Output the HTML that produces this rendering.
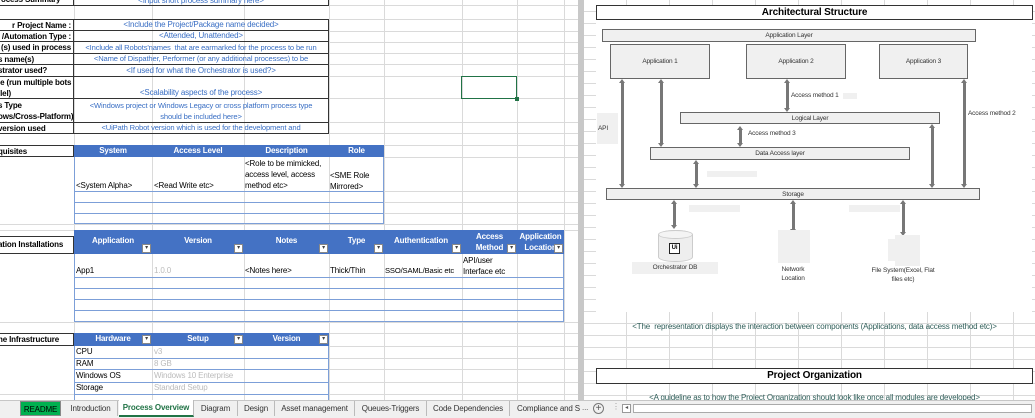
<!DOCTYPE html>
<html><head><meta charset="utf-8"><style>
*{margin:0;padding:0;box-sizing:border-box}
body{width:1035px;height:418px;overflow:hidden;background:#fff;position:relative;font-family:"Liberation Sans",sans-serif;font-size:8px;letter-spacing:-0.15px;color:#000}
.a{position:absolute}
.h{position:absolute;height:1px;background:#dadada}
.v{position:absolute;width:1px;background:#dadada}
.t{position:absolute;white-space:nowrap}
.lb{position:absolute;border:1px solid #333;border-left:none;font-weight:bold;font-size:8px;white-space:nowrap;overflow:hidden;display:flex;align-items:center;justify-content:flex-end;padding-right:2px}
.vb{position:absolute;border:1px solid #333;color:#3a6fc4;text-align:center;font-size:8px;white-space:nowrap;overflow:hidden}
.hd{position:absolute;background:#4472c4;color:#fff;font-weight:bold;font-size:8px;text-align:center;white-space:nowrap}
.dd{position:absolute;width:9px;height:9px;background:#fff;border:1px solid #888;font-size:6px;color:#444;line-height:7px;text-align:center}
.bx{position:absolute;background:#f0f0f0;border:1.5px solid #666;font-size:6.5px;color:#333;display:flex;align-items:center;justify-content:center;white-space:nowrap}
.ar{position:absolute;width:3px;background:#777}
.ar:before,.ar:after{content:"";position:absolute;left:-2px;border-left:3.5px solid transparent;border-right:3.5px solid transparent}
.ar:before{top:-3px;border-bottom:4px solid #777}
.ar:after{bottom:-3px;border-top:4px solid #777}
.gy{position:absolute;background:#f0f0f0}
.tab{position:absolute;top:401px;height:15px;font-size:8px;color:#333;text-align:center;line-height:15px;border-right:1px solid #bbb;white-space:nowrap;overflow:hidden}
.ds{font-size:6.5px;color:#333}
</style></head><body>

<div class="h" style="left:0;width:578px;top:19px"></div>
<div class="h" style="left:0;width:578px;top:133px"></div>
<div class="h" style="left:0;width:578px;top:224px"></div>
<div class="h" style="left:0;width:578px;top:230px"></div>
<div class="h" style="left:0;width:578px;top:322px"></div>
<div class="h" style="left:0;width:578px;top:333px"></div>
<div class="h" style="left:329px;width:249px;top:346px"></div>
<div class="h" style="left:329px;width:249px;top:358px"></div>
<div class="h" style="left:329px;width:249px;top:369px"></div>
<div class="h" style="left:329px;width:249px;top:382px"></div>
<div class="h" style="left:0;width:578px;top:394px"></div>
<div class="h" style="left:329px;width:249px;top:5px"></div>
<div class="h" style="left:329px;width:249px;top:31px"></div><div class="h" style="left:329px;width:249px;top:42px"></div>
<div class="h" style="left:329px;width:249px;top:53px"></div><div class="h" style="left:329px;width:249px;top:64px"></div>
<div class="h" style="left:329px;width:249px;top:76px"></div><div class="h" style="left:329px;width:249px;top:98px"></div>
<div class="h" style="left:329px;width:249px;top:122px"></div>
<div class="h" style="left:384px;width:194px;top:145px"></div><div class="h" style="left:384px;width:194px;top:157px"></div>
<div class="h" style="left:384px;width:194px;top:191px"></div><div class="h" style="left:384px;width:194px;top:202px"></div>
<div class="h" style="left:384px;width:194px;top:213px"></div>
<div class="v" style="left:74px;top:0;height:400px"></div>
<div class="v" style="left:152px;top:0;height:400px"></div>
<div class="v" style="left:244px;top:0;height:400px"></div>
<div class="v" style="left:329px;top:0;height:400px"></div>
<div class="v" style="left:384px;top:0;height:400px"></div>
<div class="v" style="left:462px;top:0;height:400px"></div>
<div class="v" style="left:517px;top:0;height:400px"></div>
<div class="v" style="left:564px;top:0;height:400px"></div>

<div class="lb" style="left:-2px;top:-8px;width:76px;height:14px;justify-content:flex-start;padding-left:0">rocess Summary</div>
<div class="vb" style="left:73px;top:-8px;width:256px;height:14px;line-height:12px;padding-top:2px">&lt;Input short process summary here&gt;</div>
<div class="lb" style="left:-2px;top:19px;width:76px;height:12px">r Project Name :</div>
<div class="vb" style="left:73px;top:19px;width:256px;height:12px;line-height:10px">&lt;Include the Project/Package name decided&gt;</div>
<div class="lb" style="left:-2px;top:30px;width:76px;height:12px">/Automation Type :</div>
<div class="vb" style="left:73px;top:30px;width:256px;height:12px;line-height:10px">&lt;Attended, Unattended&gt;</div>
<div class="lb" style="left:-2px;top:41px;width:76px;height:13px">(s) used in process</div>
<div class="vb" style="left:73px;top:41px;width:256px;height:13px;line-height:11px;font-size:7.6px">&lt;Include all Robots'names &nbsp;that are earmarked for the process to be run</div>
<div class="lb" style="left:-2px;top:53px;width:76px;height:12px;justify-content:flex-start;padding-left:0">s name(s)</div>
<div class="vb" style="left:73px;top:53px;width:256px;height:12px;line-height:10px;font-size:7.6px">&lt;Name of Dispather, Performer (or any additional processes) to be</div>
<div class="lb" style="left:-2px;top:64px;width:76px;height:13px;justify-content:flex-start;padding-left:0">strator used?</div>
<div class="vb" style="left:73px;top:64px;width:256px;height:13px;line-height:11px">&lt;If used for what the Orchestrator is used?&gt;</div>
<div class="lb" style="left:-2px;top:76px;width:76px;height:23px;line-height:11px;align-items:flex-start;justify-content:flex-start;padding-left:0">le (run multiple bots<br>llel)</div>
<div class="vb" style="left:73px;top:76px;width:256px;height:23px;line-height:10px;padding-top:11px">&lt;Scalability aspects of the process&gt;</div>
<div class="lb" style="left:-2px;top:98px;width:76px;height:25px;line-height:11px;align-items:flex-start;justify-content:flex-start;padding-left:0;padding-top:1px">s Type<br>ows/Cross-Platform)</div>
<div class="vb" style="left:73px;top:98px;width:256px;height:25px;line-height:11px;padding-top:1px;font-size:7.6px">&lt;Windows project or Windows Legacy or cross platform process type<br>should be included here&gt;</div>
<div class="lb" style="left:-2px;top:122px;width:76px;height:12px;justify-content:flex-start;padding-left:0">version used</div>
<div class="vb" style="left:73px;top:122px;width:256px;height:12px;line-height:10px;font-size:7.6px">&lt;UiPath Robot version which is used for the development and</div>

<div class="lb" style="left:-2px;top:145px;width:76px;height:12px;justify-content:flex-start;padding-left:0">quisites</div>
<div class="hd" style="left:74px;top:145px;width:310px;height:12px"></div>
<div class="hd t" style="left:74px;top:146px;width:78px">System</div>
<div class="hd t" style="left:152px;top:146px;width:92px">Access Level</div>
<div class="hd t" style="left:244px;top:146px;width:85px">Description</div>
<div class="hd t" style="left:329px;top:146px;width:55px">Role</div>
<div class="a" style="left:74px;top:157px;width:310px;height:67px;border:1px solid #7c9fd8;border-top:none"></div>
<div class="h" style="left:74px;width:310px;top:191px;background:#7c9fd8"></div>
<div class="h" style="left:74px;width:310px;top:202px;background:#7c9fd8"></div>
<div class="h" style="left:74px;width:310px;top:213px;background:#7c9fd8"></div>
<div class="t" style="left:76px;top:181px">&lt;System Alpha&gt;</div>
<div class="t" style="left:154px;top:181px">&lt;Read Write etc&gt;</div>
<div class="t" style="left:245px;top:158px;line-height:11px">&lt;Role to be mimicked,<br>access level, access<br>method etc&gt;</div>
<div class="t" style="left:330px;top:170px;line-height:11px">&lt;SME Role<br>Mirrored&gt;</div>

<div class="lb" style="left:-2px;top:236px;width:76px;height:18px;border-top:none;justify-content:flex-start;padding-left:0">ation Installations</div>
<div class="a" style="left:0;top:236px;width:74px;height:1px;background:#333"></div>
<div class="hd" style="left:74px;top:230px;width:490px;height:24px"></div>
<div class="hd t" style="left:74px;top:236px;width:78px">Application</div>
<div class="hd t" style="left:152px;top:236px;width:92px">Version</div>
<div class="hd t" style="left:244px;top:236px;width:85px">Notes</div>
<div class="hd t" style="left:329px;top:236px;width:55px">Type</div>
<div class="hd t" style="left:384px;top:236px;width:74px">Authentication</div>
<div class="hd t" style="left:462px;top:231px;width:55px;line-height:11px">Access<br>Method</div>
<div class="hd t" style="left:517px;top:231px;width:47px;line-height:11px;overflow:hidden">Application<br>Location</div>
<div class="dd" style="left:142px;top:244px">▾</div><div class="dd" style="left:234px;top:244px">▾</div>
<div class="dd" style="left:319px;top:244px">▾</div><div class="dd" style="left:374px;top:244px">▾</div>
<div class="dd" style="left:452px;top:244px">▾</div><div class="dd" style="left:507px;top:244px">▾</div>
<div class="dd" style="left:554px;top:244px">▾</div>
<div class="a" style="left:74px;top:254px;width:490px;height:68px;border:1px solid #7c9fd8;border-top:none"></div>
<div class="h" style="left:74px;width:490px;top:277px;background:#7c9fd8"></div>
<div class="h" style="left:74px;width:490px;top:288px;background:#7c9fd8"></div>
<div class="h" style="left:74px;width:490px;top:299px;background:#7c9fd8"></div>
<div class="h" style="left:74px;width:490px;top:310px;background:#7c9fd8"></div>
<div class="t" style="left:76px;top:266px">App1</div>
<div class="t" style="left:154px;top:266px;color:#bbb">1.0.0</div>
<div class="t" style="left:245px;top:266px">&lt;Notes here&gt;</div>
<div class="t" style="left:330px;top:266px">Thick/Thin</div>
<div class="t" style="left:385px;top:266px;font-size:7.6px">SSO/SAML/Basic etc</div>
<div class="t" style="left:463px;top:255px;line-height:11px">API/user<br>Interface etc</div>

<div class="lb" style="left:-2px;top:333px;width:76px;height:13px;justify-content:flex-start;padding-left:0">ne Infrastructure</div>
<div class="hd" style="left:74px;top:333px;width:255px;height:13px"></div>
<div class="hd t" style="left:74px;top:334px;width:78px">Hardware</div>
<div class="hd t" style="left:152px;top:334px;width:92px">Setup</div>
<div class="hd t" style="left:244px;top:334px;width:85px">Version</div>
<div class="dd" style="left:142px;top:335px">▾</div><div class="dd" style="left:234px;top:335px">▾</div><div class="dd" style="left:319px;top:335px">▾</div>
<div class="a" style="left:74px;top:346px;width:255px;height:60px;border:1px solid #7c9fd8;border-top:none"></div>
<div class="h" style="left:74px;width:255px;top:358px;background:#7c9fd8"></div>
<div class="h" style="left:74px;width:255px;top:369px;background:#7c9fd8"></div>
<div class="h" style="left:74px;width:255px;top:382px;background:#7c9fd8"></div>
<div class="h" style="left:74px;width:255px;top:394px;background:#7c9fd8"></div>
<div class="t" style="left:76px;top:347px">CPU</div><div class="t" style="left:154px;top:347px;color:#bbb">v3</div>
<div class="t" style="left:76px;top:359px">RAM</div><div class="t" style="left:154px;top:359px;color:#bbb">8 GB</div>
<div class="t" style="left:76px;top:371px">Windows OS</div><div class="t" style="left:154px;top:371px;color:#bbb">Windows 10 Enterprise</div>
<div class="t" style="left:76px;top:383px">Storage</div><div class="t" style="left:154px;top:383px;color:#bbb">Standard Setup</div>

<div class="a" style="left:461px;top:76px;width:56px;height:23px;border:1.5px solid #217346"></div>
<div class="a" style="left:515px;top:97px;width:4px;height:4px;background:#217346"></div>

<div class="a" style="left:578px;top:0;width:6px;height:400px;background:#c8c8c8"></div>

<div class="a" style="left:584px;top:0;width:451px;height:400px;background:repeating-linear-gradient(to bottom,transparent 0,transparent 11px,#dadada 11px,#dadada 12px),repeating-linear-gradient(to right,transparent 0,transparent 42px,#dadada 42px,#dadada 43px)"></div>
<div class="a" style="left:596px;top:20px;width:436px;height:292px;background:#fff"></div>

<div class="a" style="left:596px;top:5px;width:437px;height:15px;border:1px solid #333;background:#fff;font-weight:bold;font-size:10px;text-align:center;line-height:13px">Architectural Structure</div>

<div class="bx" style="left:602px;top:29px;width:374px;height:13px">Application Layer</div>
<div class="bx" style="left:610px;top:44px;width:100px;height:35px">Application 1</div>
<div class="bx" style="left:746px;top:44px;width:100px;height:35px">Application 2</div>
<div class="bx" style="left:879px;top:44px;width:89px;height:35px">Application 3</div>
<div class="bx" style="left:680px;top:112px;width:260px;height:12px">Logical Layer</div>
<div class="bx" style="left:650px;top:147px;width:260px;height:13px">Data Access layer</div>
<div class="bx" style="left:606px;top:188px;width:374px;height:12px">Storage</div>
<div class="ar" style="left:621px;top:82px;height:103px"></div>
<div class="ar" style="left:660px;top:82px;height:62px"></div>
<div class="ar" style="left:786px;top:82px;height:27px"></div>
<div class="ar" style="left:739px;top:129px;height:15px"></div>
<div class="ar" style="left:695px;top:163px;height:22px"></div>
<div class="ar" style="left:931px;top:127px;height:58px"></div>
<div class="ar" style="left:963px;top:82px;height:103px"></div>
<div class="ar" style="left:673px;top:203px;height:23px"></div>
<div class="ar" style="left:792px;top:203px;height:27px"></div>
<div class="ar" style="left:902px;top:203px;height:30px"></div>
<div class="gy" style="left:597px;top:113px;width:21px;height:31px"></div>
<div class="t ds" style="left:598px;top:125px">API</div>
<div class="t ds" style="left:791px;top:92px">Access method 1</div>
<div class="gy" style="left:843px;top:93px;width:14px;height:6px"></div>
<div class="t ds" style="left:968px;top:110px">Access method 2</div>
<div class="t ds" style="left:748px;top:130px">Access method 3</div>
<div class="gy" style="left:707px;top:171px;width:50px;height:6px"></div>
<div class="gy" style="left:689px;top:205px;width:51px;height:7px"></div>
<div class="gy" style="left:849px;top:205px;width:51px;height:7px"></div>
<div class="a" style="left:658px;top:230px;width:35px;height:32px;background:#eee;border:1px solid #ccc;border-radius:17px/5px"></div>
<div class="a" style="left:658px;top:230px;width:35px;height:9px;border:1px solid #ccc;border-radius:50%;background:#f4f4f4"></div>
<div class="a" style="left:669px;top:243px;width:11px;height:11px;border:1.5px solid #222;background:#fff;font-size:6px;font-weight:bold;line-height:8px;text-align:center">Ui</div>
<div class="gy" style="left:632px;top:262px;width:86px;height:12px"></div>
<div class="t ds" style="left:632px;top:264px;width:86px;text-align:center">Orchestrator DB</div>
<div class="gy" style="left:778px;top:230px;width:32px;height:33px"></div>
<div class="t ds" style="left:773px;top:265px;width:40px;text-align:center;line-height:9px">Network<br>Location</div>
<div class="gy" style="left:888px;top:239px;width:16px;height:22px"></div>
<div class="gy" style="left:895px;top:235px;width:25px;height:31px"></div>
<div class="t ds" style="left:860px;top:266px;width:86px;text-align:center;line-height:9px">File System(Excel, Flat<br>files etc)</div>

<div class="t" style="left:596px;top:322px;width:437px;text-align:center;color:#2f5e59;font-size:8px">&lt;The &nbsp;representation displays the interaction between components (Applications, data access method etc)&gt;</div>
<div class="a" style="left:596px;top:368px;width:437px;height:16px;border:1px solid #333;background:#fff;font-weight:bold;font-size:10px;text-align:center;line-height:14px">Project Organization</div>
<div class="t" style="left:596px;top:393px;width:437px;text-align:center;color:#2f5e59;font-size:8px">&lt;A guideline as to how the Project Organization should look like once all modules are developed&gt;</div>

<div class="a" style="left:0;top:400px;width:1035px;height:18px;background:#f0f0f0;border-top:1px solid #c6c6c6"></div>
<div class="tab" style="left:20px;width:41px;background:#00b050;color:#000;border:1px solid #888">README</div>
<div class="tab" style="left:64px;width:54px">Introduction</div>
<div class="tab" style="left:119px;width:75px;background:#fff;color:#217346;font-weight:bold;top:400px;height:17px;border-bottom:2px solid #217346">Process Overview</div>
<div class="tab" style="left:194px;width:44px">Diagram</div>
<div class="tab" style="left:238px;width:37px">Design</div>
<div class="tab" style="left:275px;width:80px">Asset management</div>
<div class="tab" style="left:355px;width:72px">Queues-Triggers</div>
<div class="tab" style="left:427px;width:83px">Code Dependencies</div>
<div class="tab" style="left:510px;width:70px;border:none;text-align:left;padding-left:7px">Compliance and S</div>
<div class="t" style="left:582px;top:403px;color:#555">...</div>
<div class="a" style="left:593px;top:403px;width:11px;height:11px;border:1px solid #777;border-radius:50%;font-size:10px;line-height:9px;text-align:center;color:#555">+</div>
<div class="t" style="left:612px;top:402px;color:#999">⋮</div>
<div class="a" style="left:622px;top:404px;width:9px;height:9px;border:1px solid #999;background:#fff;font-size:6px;line-height:7px;text-align:center;color:#555">◂</div>
<div class="a" style="left:633px;top:404px;width:399px;height:9px;border:1px solid #aaa;background:#fff"></div>
</body></html>
